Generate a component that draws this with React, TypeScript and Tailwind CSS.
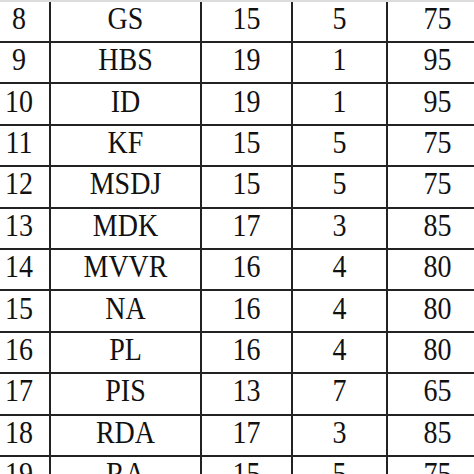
import React from 'react';

type Row = [number, string, number, number, number];

const rows: Row[] = [
  [8, 'GS', 15, 5, 75],
  [9, 'HBS', 19, 1, 95],
  [10, 'ID', 19, 1, 95],
  [11, 'KF', 15, 5, 75],
  [12, 'MSDJ', 15, 5, 75],
  [13, 'MDK', 17, 3, 85],
  [14, 'MVVR', 16, 4, 80],
  [15, 'NA', 16, 4, 80],
  [16, 'PL', 16, 4, 80],
  [17, 'PIS', 13, 7, 65],
  [18, 'RDA', 17, 3, 85],
  [19, 'RA', 15, 5, 75],
];

const cell = 'flex items-center justify-center pb-[5px] border-r-2 border-[#222]';

// the scan is a little taller than the font
const Txt: React.FC<{ children: React.ReactNode }> = ({ children }) => (
  <span className="inline-block scale-y-[1.13]">{children}</span>
);

const App: React.FC = () => {
  return (
    <div
      className="w-[474px] h-[474px] overflow-hidden bg-white text-[#111] text-[28px] leading-none"
      style={{ fontFamily: '"Liberation Serif", "Times New Roman", serif' }}
    >
      {/* edge of the row above */}
      <div className="h-[2px] bg-[#dcdcdc]" />
      <div className="ml-[-11px] w-[500px]">
        {rows.map((r, i) => (
          <div
            key={r[0]}
            className={`flex border-b-2 border-[#222] ${i === 0 ? 'h-[41px]' : 'h-[41.4px]'}`}
          >
            <div className={`${cell} w-[62px]`}><Txt>{r[0]}</Txt></div>
            <div className={`${cell} w-[151px]`}><Txt>{r[1]}</Txt></div>
            <div className={`${cell} w-[91px]`}><Txt>{r[2]}</Txt></div>
            <div className={`${cell} w-[95px]`}><Txt>{r[3]}</Txt></div>
            <div className="flex items-center justify-center pb-[5px] w-[99px]"><Txt>{r[4]}</Txt></div>
          </div>
        ))}
      </div>
    </div>
  );
};

export default App;
